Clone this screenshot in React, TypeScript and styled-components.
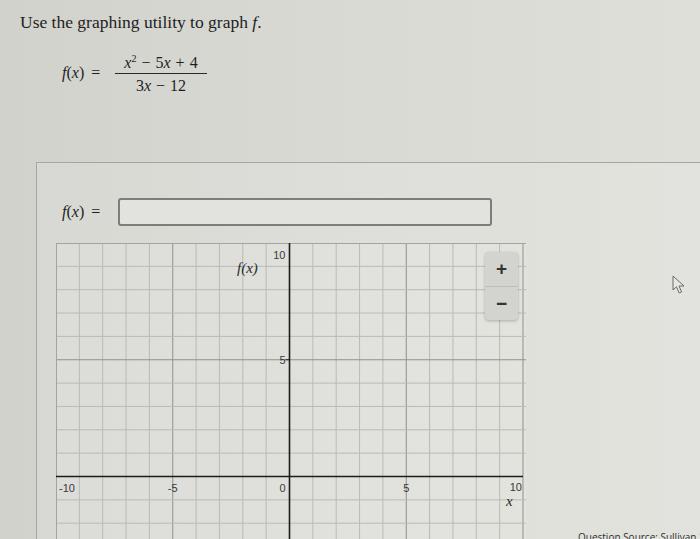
import React from 'react';
import styled, { createGlobalStyle } from 'styled-components';

const GlobalStyle = createGlobalStyle`
    html, body {
        margin: 0;
        padding: 0;
        overflow: hidden;
    }

    body {
        width: 700px;
        height: 539px;
        background: linear-gradient(90deg, #d2d2cd 0%, #d9d9d4 45%, #dfdfda 100%);
        font-family: 'Liberation Serif', 'Times New Roman', serif;
        color: #1e1e1e;
    }
`;

const Page = styled.div`
    width: 700px;
    height: 539px;
    overflow: hidden;
    display: flex;
    flex-direction: column;
`;

const Header = styled.div`
    height: 162px;
    box-sizing: border-box;
    padding: 11px 0 0 20px;
`;

const Prompt = styled.p`
    margin: 0;
    font-size: 17.5px;
    line-height: 22px;
`;

const Italic = styled.i`
    font-style: italic;
`;

const FormulaRow = styled.div`
    display: flex;
    align-items: center;
    gap: 8px;
    margin: 17px 0 0 42px;
    font-size: 16px;
`;

const Label = styled.span<{ $width: number }>`
    display: inline-block;
    width: ${(p) => p.$width}px;
    white-space: nowrap;
    word-spacing: 3px;
`;

const Fraction = styled.span`
    display: inline-flex;
    flex-direction: column;
    align-items: center;
    width: 92px;
`;

const Numerator = styled.span`
    padding: 0 2px 1px;
    line-height: 18px;
    word-spacing: 1px;
`;

const Denominator = styled.span`
    align-self: stretch;
    text-align: center;
    border-top: 1px solid #2a2a2a;
    padding-top: 3px;
    line-height: 18px;
    word-spacing: 1px;
`;

const Panel = styled.div`
    flex: 1;
    margin-left: 36px;
    border-top: 1px solid #a6a6a1;
    border-left: 1px solid #a6a6a1;
    background: rgba(255, 255, 255, 0.12);
    padding-left: 19px;
    display: flex;
`;

const MainColumn = styled.div`
    display: flex;
    flex-direction: column;
`;

const AnswerRow = styled.div`
    display: flex;
    align-items: center;
    gap: 6px;
    margin: 35px 0 17px 6px;
    font-size: 16px;
`;

const AnswerInput = styled.input`
    width: 374px;
    height: 28px;
    box-sizing: border-box;
    border: 2px solid #7d7d79;
    border-radius: 3px;
    background: #e2e2de;
    outline: none;
`;

const GraphBox = styled.div`
    position: relative;
    width: 470px;
    height: 296px;
`;

const ZoomControls = styled.div`
    position: absolute;
    left: 429px;
    top: 9px;
    width: 33px;
    height: 68px;
    display: flex;
    flex-direction: column;
    border-radius: 4px;
    background: #d3d3cf;
    box-shadow: 0 1px 3px rgba(0, 0, 0, 0.25);
    overflow: hidden;
`;

const ZoomButton = styled.button<{ $divider?: boolean }>`
    flex: 1;
    border: none;
    border-top: ${(p) => (p.$divider ? '1px solid #bdbdb9' : 'none')};
    background: transparent;
    color: #333;
    font-family: 'Liberation Sans', Arial, sans-serif;
    font-size: 19px;
    font-weight: bold;
    line-height: 1;
    padding: 0;
    cursor: pointer;
`;

const SideColumn = styled.div`
    position: relative;
    flex: 1;
    display: flex;
    flex-direction: column;
    justify-content: flex-end;
    padding-left: 52px;
`;

const Pointer = styled.svg`
    position: absolute;
    left: 146px;
    top: 112px;
`;

const Source = styled.div`
    font-family: 'Open Sans', 'Liberation Sans', sans-serif;
    font-size: 10px;
    color: #2e2e2e;
    white-space: nowrap;
    margin-bottom: -5px;
`;

const U = 23.35;
const W = 470;
const H = 296;
const X0 = 10 * U;
const Y0 = 10 * U;

function Grid() {
    const vertical = [];
    for (let i = -10; i <= 10; i++) {
        if (i === 0) continue;
        const x = X0 + i * U;
        vertical.push(
            <line
                key={`v${i}`}
                x1={x}
                y1={0}
                x2={x}
                y2={H}
                stroke={i % 5 === 0 ? '#8f8f8b' : '#babab6'}
                strokeWidth={1}
            />
        );
    }
    const horizontal = [];
    for (let j = 10; j >= -3; j--) {
        if (j === 0) continue;
        const y = Y0 - j * U;
        horizontal.push(
            <line
                key={`h${j}`}
                x1={0}
                y1={y}
                x2={W}
                y2={y}
                stroke={j % 5 === 0 ? '#8f8f8b' : '#babab6'}
                strokeWidth={1}
            />
        );
    }

    return (
        <svg width={W} height={H} style={{ display: 'block' }}>
            <rect x={0} y={0} width={W} height={H} fill="rgba(255,255,255,0.1)" />
            {vertical}
            {horizontal}
            <line x1={0.5} y1={0} x2={0.5} y2={H} stroke="#a3a39f" />
            <line x1={0} y1={0.5} x2={W} y2={0.5} stroke="#a3a39f" />
            <line x1={X0} y1={0} x2={X0} y2={H} stroke="#1c1c1c" strokeWidth={1.6} />
            <line x1={0} y1={Y0} x2={W - 3} y2={Y0} stroke="#1c1c1c" strokeWidth={1.6} />
            <line x1={X0 - 4} y1={Y0 - 5 * U} x2={X0} y2={Y0 - 5 * U} stroke="#1c1c1c" />
            <g fontFamily="'Liberation Sans', Arial, sans-serif" fontSize="11" fill="#3a3a3a">
                <text x={X0 - 4} y={16} textAnchor="end">10</text>
                <text x={X0 - 4} y={Y0 - 5 * U + 4} textAnchor="end">5</text>
                <text x={3} y={Y0 + 15}>-10</text>
                <text x={X0 - 5 * U} y={Y0 + 15} textAnchor="middle">-5</text>
                <text x={X0 - 4} y={Y0 + 15} textAnchor="end">0</text>
                <text x={X0 + 5 * U} y={Y0 + 15} textAnchor="middle">5</text>
                <text x={W - 4} y={Y0 + 14} textAnchor="end">10</text>
            </g>
            <g fontFamily="'Liberation Serif', 'Times New Roman', serif" fontStyle="italic" fontSize="15" fill="#2a2a2a">
                <text x={181} y={30}>f(x)</text>
                <text x={450} y={Y0 + 29}>x</text>
            </g>
        </svg>
    );
}

export default function App() {
    return (
        <Page>
            <GlobalStyle />
            <Header>
                <Prompt>
                    Use the graphing utility to graph <Italic>f</Italic>.
                </Prompt>
                <FormulaRow>
                    <Label $width={45}>
                        <Italic>f</Italic>(<Italic>x</Italic>) =
                    </Label>
                    <Fraction>
                        <Numerator>
                            <Italic>x</Italic>
                            <sup style={{ fontSize: '10px' }}>2</sup> − 5<Italic>x</Italic> + 4
                        </Numerator>
                        <Denominator>
                            3<Italic>x</Italic> − 12
                        </Denominator>
                    </Fraction>
                </FormulaRow>
            </Header>
            <Panel>
                <MainColumn>
                    <AnswerRow>
                        <Label $width={50}>
                            <Italic>f</Italic>(<Italic>x</Italic>) =
                        </Label>
                        <AnswerInput type="text" />
                    </AnswerRow>
                    <GraphBox>
                        <Grid />
                        <ZoomControls>
                            <ZoomButton>+</ZoomButton>
                            <ZoomButton $divider>−</ZoomButton>
                        </ZoomControls>
                    </GraphBox>
                </MainColumn>
                <SideColumn>
                    <Pointer width="14" height="20" viewBox="0 0 14 20">
                        <path
                            d="M1 1 L1 15 L4.5 11.8 L7.2 18 L9.6 17 L7 11 L12 11 Z"
                            fill="#e6e6e2"
                            stroke="#6a6a66"
                            strokeWidth="1"
                            strokeLinejoin="round"
                        />
                    </Pointer>
                    <Source>Question Source: Sullivan 2</Source>
                </SideColumn>
            </Panel>
        </Page>
    );
}
